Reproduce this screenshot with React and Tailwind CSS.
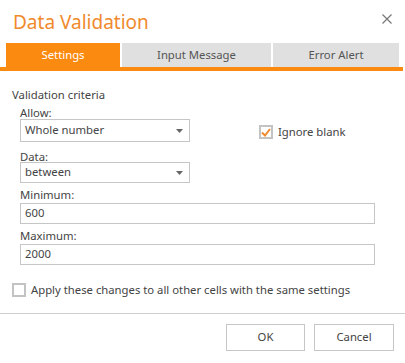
import React from "react";

const Arrow = () => (
  <svg width="7" height="4" viewBox="0 0 7 4" className="absolute right-[6px] top-1/2 -translate-y-1/2">
    <path d="M0 0 L7 0 L3.5 4 Z" fill="#666" />
  </svg>
);

export default function App() {
  return (
    <div
      className="w-[405px] h-[363px] bg-white flex flex-col text-[#444] text-[11.3px] overflow-hidden"
      style={{ fontFamily: '"Noto Sans", "Open Sans", sans-serif' }}
    >
      {/* Header */}
      <div className="flex items-start justify-between h-[43px] pl-[13px] pr-[13px]">
        <div className="text-[19px] leading-[28px] mt-[8px] text-[#f08a2e]">Data Validation</div>
        <svg width="10" height="10" viewBox="0 0 10 10" className="mt-[14px]">
          <path d="M0.5 0.5 L9.5 9.5 M9.5 0.5 L0.5 9.5" stroke="#777" strokeWidth="1.2" />
        </svg>
      </div>
      {/* Tabs */}
      <div className="flex h-[24px] pl-[6px] gap-[2px]">
        <div className="w-[114px] bg-[#fb8a10] text-white flex items-center justify-center">Settings</div>
        <div className="w-[149px] bg-[#e0e0e0] text-[#555] flex items-center justify-center">Input Message</div>
        <div className="w-[126px] bg-[#e0e0e0] text-[#555] flex items-center justify-center">Error Alert</div>
      </div>
      <div className="w-[403px] h-[4px] bg-[#fb8a10]" />

      {/* Body */}
      <div className="pl-[12px] pt-[16px] leading-[16px]">Validation criteria</div>
      <div className="pl-[20px] flex flex-col">
        <div className="leading-[14px] mt-[3px]">Allow:</div>
        <div className="flex items-center mt-[-1px]">
          <div className="relative w-[170px] h-[23px] border border-[#c6c6c6] flex items-center pl-[4px]">
            Whole number
            <Arrow />
          </div>
          <label className="flex items-center ml-[69px] mt-[3px]">
            <span className="w-[14px] h-[14px] border-2 border-[#c3c3c3] flex items-center justify-center">
              <svg width="10" height="9" viewBox="0 0 10 9">
                <path d="M1 4.5 L4 7.5 L9 1" stroke="#f08a2e" strokeWidth="2" fill="none" />
              </svg>
            </span>
            <span className="ml-[5px]">Ignore blank</span>
          </label>
        </div>
        <div className="leading-[14px] mt-[8px]">Data:</div>
        <div className="relative mt-[-2px] w-[170px] h-[21px] border border-[#c6c6c6] flex items-center pl-[4px]">
          between
          <Arrow />
        </div>
        <div className="leading-[14px] mt-[5px]">Minimum:</div>
        <div className="mt-[1px] w-[355px] h-[21px] border border-[#c6c6c6] flex items-center pl-[4px]">600</div>
        <div className="leading-[14px] mt-[5px]">Maximum:</div>
        <div className="mt-[1px] w-[355px] h-[21px] border border-[#c6c6c6] flex items-center pl-[4px]">2000</div>
      </div>
      <label className="flex items-center h-[16px] pl-[12px] mt-[17px]">
        <span className="w-[14px] h-[14px] border-2 border-[#c3c3c3]" />
        <span className="ml-[5px]">Apply these changes to all other cells with the same settings</span>
      </label>
      <div className="mt-[15px] h-px w-full bg-[#cfcfcf]" />
      <div className="flex justify-end gap-[9px] pr-[11px] pt-[10px]">
        <button className="w-[79px] h-[27px] border border-[#c6c6c6] text-[#444] text-[11.3px]">OK</button>
        <button className="w-[80px] h-[27px] border border-[#c6c6c6] text-[#444] text-[11.3px]">Cancel</button>
      </div>
    </div>
  );
}
